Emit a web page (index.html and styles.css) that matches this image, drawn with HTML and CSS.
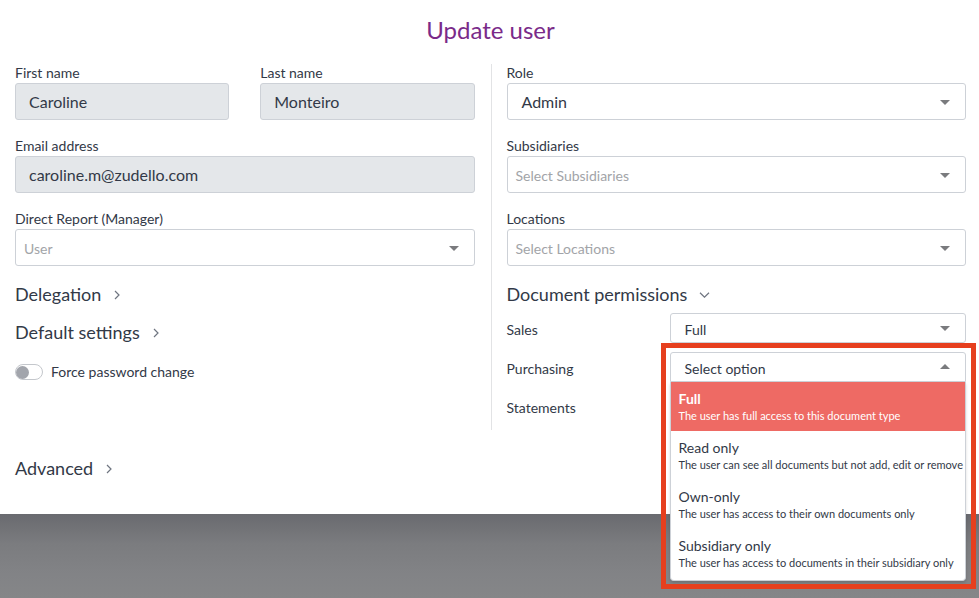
FILE: index.html
```html
<!DOCTYPE html>
<html>
  <head>
    <meta charset="UTF-8" />
    <meta name="viewport" content="width=device-width, initial-scale=1.0" />
    <title>Update user</title>
    <link rel="stylesheet" href="styles.css">
  </head>
  <body>
    <div class="modal">
      <h1 class="title">Update user</h1>

      <div class="columns">
        <div class="col col-left">
          <div class="name-row">
            <div class="field">
              <label>First name</label>
              <div class="input disabled">Caroline</div>
            </div>
            <div class="field">
              <label>Last name</label>
              <div class="input disabled">Monteiro</div>
            </div>
          </div>

          <div class="field">
            <label>Email address</label>
            <div class="input disabled">caroline.m@zudello.com</div>
          </div>

          <div class="field">
            <label>Direct Report (Manager)</label>
            <div class="input select placeholder">User<span class="caret"></span></div>
          </div>

          <div class="section-toggle">
            Delegation
            <svg class="chev-right" width="6" height="10" viewBox="0 0 6 10"><path d="M1 1l4 4-4 4" fill="none" stroke="#6f7580" stroke-width="1.2"/></svg>
          </div>
          <div class="section-toggle">
            Default settings
            <svg class="chev-right" width="6" height="10" viewBox="0 0 6 10"><path d="M1 1l4 4-4 4" fill="none" stroke="#6f7580" stroke-width="1.2"/></svg>
          </div>

          <div class="switch-row">
            <span class="switch"><span class="knob"></span></span>
            Force password change
          </div>
        </div>

        <div class="col col-right">
          <div class="field">
            <label>Role</label>
            <div class="input select">Admin<span class="caret"></span></div>
          </div>

          <div class="field">
            <label>Subsidiaries</label>
            <div class="input select placeholder">Select Subsidiaries<span class="caret"></span></div>
          </div>

          <div class="field">
            <label>Locations</label>
            <div class="input select placeholder">Select Locations<span class="caret"></span></div>
          </div>

          <div class="section-toggle perm-title">
            Document permissions
            <svg class="chev-down" width="11" height="6" viewBox="0 0 11 6"><path d="M1 0.8l4.5 4.4 4.5-4.4" fill="none" stroke="#6f7580" stroke-width="1.2"/></svg>
          </div>

          <div class="perm-row">
            <span class="perm-label">Sales</span>
            <div class="small-select">Full<span class="caret"></span></div>
          </div>

          <div class="perm-row">
            <span class="perm-label">Purchasing</span>
            <div class="dropdown">
              <div class="small-select open">Select option<span class="caret up"></span></div>
              <ul class="menu">
                <li class="option active">
                  <div class="option-name">Full</div>
                  <div class="option-desc">The user has full access to this document type</div>
                </li>
                <li class="option">
                  <div class="option-name">Read only</div>
                  <div class="option-desc">The user can see all documents but not add, edit or remove</div>
                </li>
                <li class="option">
                  <div class="option-name">Own-only</div>
                  <div class="option-desc">The user has access to their own documents only</div>
                </li>
                <li class="option">
                  <div class="option-name">Subsidiary only</div>
                  <div class="option-desc">The user has access to documents in their subsidiary only</div>
                </li>
              </ul>
              <div class="highlight"></div>
            </div>
          </div>

          <div class="perm-row">
            <span class="perm-label">Statements</span>
          </div>
        </div>
      </div>

      <div class="section-toggle advanced">
        Advanced
        <svg class="chev-right" width="6" height="10" viewBox="0 0 6 10"><path d="M1 1l4 4-4 4" fill="none" stroke="#6f7580" stroke-width="1.2"/></svg>
      </div>
    </div>
    <div class="backdrop"></div>
  </body>
</html>
```

FILE: styles.css
```css
* {
  box-sizing: border-box;
  margin: 0;
  padding: 0;
}

body {
  display: flex;
  flex-direction: column;
  min-height: 100vh;
  font-family: Lato, "Open Sans", sans-serif;
  color: #323947;
  background-color: #fff;
}

.modal {
  background-color: #fff;
  padding: 15px 13px 35px 15px;
}

.title {
  font-size: 24px;
  font-weight: 400;
  line-height: 30px;
  color: #7a2a89;
  text-align: center;
  margin-bottom: 19px;
}

.columns {
  display: grid;
  grid-template-columns: 1fr 1fr;
}

.col-left {
  padding-right: 16px;
}

.col-right {
  border-left: 1px solid #e2e3e5;
  padding-left: 15px;
}

.name-row {
  display: grid;
  grid-template-columns: 1fr 1fr;
  column-gap: 31px;
}

.field {
  margin-bottom: 17px;
}

label {
  display: block;
  font-size: 14px;
  line-height: 17px;
  margin-bottom: 2px;
}

.input {
  position: relative;
  display: flex;
  align-items: center;
  height: 37px;
  padding: 0 36px 0 13px;
  font-size: 16px;
  border: 1px solid #cdd1d7;
  border-radius: 3px;
  background-color: #fff;
}

.input.disabled {
  background-color: #e4e7ea;
}

.input.select {
  padding-left: 14px;
}

.input.placeholder {
  padding-left: 8px;
  padding-top: 2px;
  font-size: 14px;
  color: #a2a4a8;
}

.caret {
  position: absolute;
  right: 15px;
  top: 50%;
  margin-top: -2px;
  width: 0;
  height: 0;
  border-left: 5px solid transparent;
  border-right: 5px solid transparent;
  border-top: 5px solid #7a7b7e;
}

.caret.up {
  border-top: none;
  border-bottom: 5px solid #7a7b7e;
  margin-top: -3px;
}

.section-toggle {
  display: flex;
  align-items: center;
  font-size: 18px;
  line-height: 22px;
  margin-bottom: 16px;
}

.chev-right {
  margin-left: 13px;
  margin-top: 1px;
}

.chev-down {
  margin-left: 12px;
  margin-top: 2px;
}

.perm-title {
  margin-bottom: 8px;
}

.switch-row {
  display: flex;
  align-items: center;
  margin-top: 21px;
  font-size: 14px;
  line-height: 16px;
}

.switch {
  display: inline-flex;
  align-items: center;
  width: 28px;
  height: 16px;
  border: 1px solid #c4c7cc;
  border-radius: 8px;
  margin-right: 8px;
  background-color: #fff;
}

.knob {
  width: 13px;
  height: 13px;
  border-radius: 50%;
  background-color: #a2a5ac;
}

.perm-row {
  display: grid;
  grid-template-columns: 163px 1fr;
  align-items: center;
  height: 30px;
  margin-bottom: 9px;
}

.perm-label {
  font-size: 14px;
  padding-top: 2px;
}

.small-select {
  position: relative;
  display: flex;
  align-items: center;
  height: 30px;
  padding: 2px 36px 0 14px;
  font-size: 14px;
  border: 1px solid #cdd1d7;
  border-radius: 3px;
  background-color: #fff;
}

.small-select.open {
  border-radius: 3px 3px 0 0;
}

.dropdown {
  position: relative;
}

.menu {
  position: absolute;
  top: 100%;
  left: 0;
  right: 0;
  z-index: 2;
  list-style: none;
  background-color: #fff;
  border: 1px solid #cdd1d7;
  border-top: none;
  border-radius: 0 0 4px 4px;
  padding-bottom: 2px;
  box-shadow: 0 2px 3px rgba(0, 0, 0, 0.15);
}

.option {
  height: 49px;
  padding: 8px 8px 0;
  white-space: nowrap;
}

.option.active {
  background-color: #ee6a64;
  color: #fff;
}

.option-name {
  font-size: 14px;
  line-height: 18px;
}

.option.active .option-name {
  font-weight: 700;
}

.option-desc {
  font-size: 11px;
  line-height: 14px;
  margin-top: 1px;
}

.highlight {
  position: absolute;
  top: -9px;
  left: -9px;
  width: 315px;
  height: 246px;
  border: 5px solid #e63f1e;
  z-index: 3;
}

.advanced {
  margin-top: 27px;
  margin-bottom: 0;
}

.backdrop {
  flex: 1;
  background: linear-gradient(to bottom, #696a6f 0, #7b7c7f 30px, #828386 60px, #858688 100%);
}
```
